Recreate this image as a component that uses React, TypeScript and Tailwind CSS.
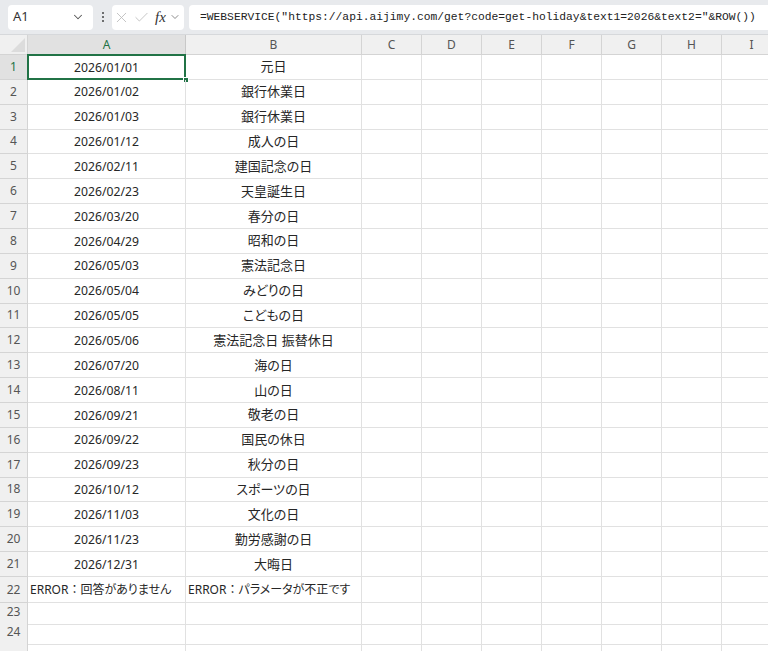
import { ChevronDown, X, Check } from 'lucide-react';

const holidays: [string, string][] = [
  ['2026/01/01', '元日'],
  ['2026/01/02', '銀行休業日'],
  ['2026/01/03', '銀行休業日'],
  ['2026/01/12', '成人の日'],
  ['2026/02/11', '建国記念の日'],
  ['2026/02/23', '天皇誕生日'],
  ['2026/03/20', '春分の日'],
  ['2026/04/29', '昭和の日'],
  ['2026/05/03', '憲法記念日'],
  ['2026/05/04', 'みどりの日'],
  ['2026/05/05', 'こどもの日'],
  ['2026/05/06', '憲法記念日 振替休日'],
  ['2026/07/20', '海の日'],
  ['2026/08/11', '山の日'],
  ['2026/09/21', '敬老の日'],
  ['2026/09/22', '国民の休日'],
  ['2026/09/23', '秋分の日'],
  ['2026/10/12', 'スポーツの日'],
  ['2026/11/03', '文化の日'],
  ['2026/11/23', '勤労感謝の日'],
  ['2026/12/31', '大晦日'],
];

const extraCols = ['C', 'D', 'E', 'F', 'G', 'H', 'I'];
const gridCols = 'grid grid-cols-[28px_158px_176px_60px_60px_60px_60px_60px_60px_60px]';

function RowHeader({ n, active }: { n?: number; active?: boolean }) {
  return (
    <div
      className={`flex items-end justify-center pb-[3px] border-r border-b border-[#d4d4d4] text-[12px] ${
        active ? 'bg-[#e1e1e1] text-[#217346]' : 'bg-[#f0f0f0] text-[#555]'
      }`}
    >
      {n}
    </div>
  );
}

function EmptyCells() {
  return (
    <>
      {extraCols.map((c) => (
        <div key={c} className="border-r border-b border-[#e1e1e1]" />
      ))}
    </>
  );
}

// full-width colon keeps its em width (palt would squeeze it)
function ErrorText({ msg }: { msg: string }) {
  return (
    <>
      ERROR<span className="[font-feature-settings:normal]">：</span>
      {msg}
    </>
  );
}

export default function App() {
  return (
    <div
      className="w-[768px] h-[651px] overflow-hidden bg-white text-[#262626] [font-feature-settings:'palt']"
      style={{ fontFamily: '"Noto Sans", "Noto Sans CJK JP", sans-serif' }}
    >
      {/* formula bar */}
      <div className="h-[35px] bg-[#e8eaed] flex items-center pl-2 border-b border-[#d6d8db]">
        <div className="w-[85px] h-[25px] bg-white rounded-[4px] flex items-center justify-between pl-[5px] pr-[8px] text-[13px] text-[#333]">
          <span>A1</span>
          <ChevronDown className="w-[14px] h-[14px] text-[#555]" strokeWidth={1.75} />
        </div>
        <div className="w-[10px] ml-[5px] flex flex-col items-center gap-[2px]">
          <span className="w-[2px] h-[2px] bg-[#444] rounded-full" />
          <span className="w-[2px] h-[2px] bg-[#444] rounded-full" />
          <span className="w-[2px] h-[2px] bg-[#444] rounded-full" />
        </div>
        <div className="w-[72px] ml-[4px] h-[25px] bg-white rounded-[4px] flex items-center pl-[1px] gap-[3px] text-[#bbb]">
          <X className="w-[17px] h-[17px]" strokeWidth={1.2} />
          <Check className="w-[17px] h-[17px]" strokeWidth={1.2} />
          <span
            className="italic text-[15px] text-[#333] ml-[2px] leading-none"
            style={{ fontFamily: '"Liberation Serif", serif' }}
          >
            fx
          </span>
          <ChevronDown className="w-[12px] h-[12px] text-[#666]" strokeWidth={1.5} />
        </div>
        <div className="flex-1 ml-[5px] h-[25px] bg-white rounded-l-[4px] flex items-center pl-[11px] whitespace-nowrap overflow-hidden">
          <span
            className="text-[11.3px] text-[#222]"
            style={{ fontFamily: '"Liberation Mono", "DejaVu Sans Mono", monospace' }}
          >
            =WEBSERVICE("https://api.aijimy.com/get?code=get-holiday&text1=2026&text2="&ROW())
          </span>
        </div>
      </div>

      {/* column headers */}
      <div className={`${gridCols} h-[20px] text-[12px] text-[#555]`}>
        <div className="bg-[#f0f0f0] border-r border-b border-[#d4d4d4] relative overflow-hidden">
          <div className="absolute right-[2px] bottom-[2px] w-0 h-0 border-l-[14px] border-l-transparent border-b-[14px] border-b-[#dcdcdc]" />
        </div>
        <div className="bg-[#e1e1e1] text-[#217346] flex items-center justify-center border-r border-b border-[#c8c8c8]">
          A
        </div>
        <div className="bg-[#f0f0f0] flex items-center justify-center border-r border-b border-[#d4d4d4]">B</div>
        {extraCols.map((c) => (
          <div key={c} className="bg-[#f0f0f0] flex items-center justify-center border-r border-b border-[#d4d4d4]">
            {c}
          </div>
        ))}
      </div>

      {/* data rows */}
      {holidays.map(([date, name], i) => (
        <div key={date} className={`${gridCols} h-[24.86px] text-[13px]`}>
          <RowHeader n={i + 1} active={i === 0} />
          <div className="relative flex items-end justify-center pb-[2px] border-r border-b border-[#e1e1e1] text-[12.2px]">
            {date}
            {i === 0 && (
              <>
                <div className="absolute -left-px -top-px -right-px -bottom-px border-2 border-[#217346] pointer-events-none" />
                <div className="absolute -right-[4px] -bottom-[4px] w-[6px] h-[6px] bg-[#217346] border border-white" />
              </>
            )}
          </div>
          <div className="flex items-end justify-center pb-[2px] border-r border-b border-[#e1e1e1]">{name}</div>
          <EmptyCells />
        </div>
      ))}

      <div className={`${gridCols} h-[26px] text-[12px]`}>
        <RowHeader n={22} />
        <div className="flex items-end pl-[2px] pb-[3px] whitespace-nowrap border-r border-b border-[#e1e1e1]">
          <ErrorText msg="回答がありません" />
        </div>
        <div className="flex items-end pl-[2px] pb-[3px] whitespace-nowrap border-r border-b border-[#e1e1e1]">
          <ErrorText msg="パラメータが不正です" />
        </div>
        <EmptyCells />
      </div>

      {[23, 24].map((n) => (
        <div key={n} className={`${gridCols} h-[20px]`}>
          <RowHeader n={n} />
          <div className="border-r border-b border-[#e1e1e1]" />
          <div className="border-r border-b border-[#e1e1e1]" />
          <EmptyCells />
        </div>
      ))}
      <div className={`${gridCols} h-[20px]`}>
        <RowHeader />
        <div className="border-r border-b border-[#e1e1e1]" />
        <div className="border-r border-b border-[#e1e1e1]" />
        <EmptyCells />
      </div>
    </div>
  );
}
